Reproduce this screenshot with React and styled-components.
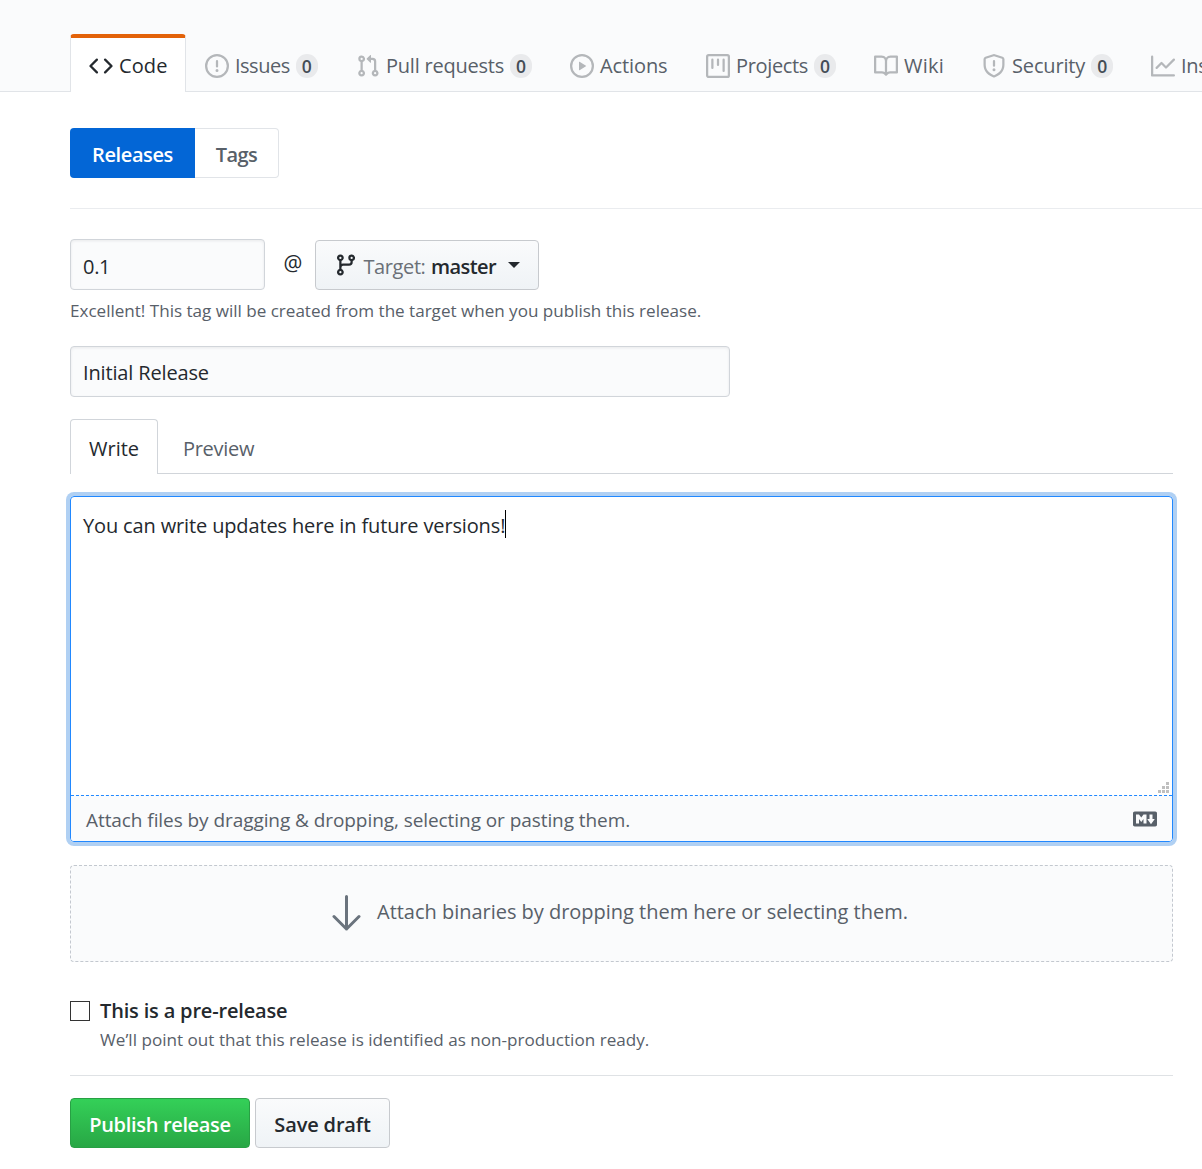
import React, { useState } from 'react';
import styled, { createGlobalStyle, css } from 'styled-components';

const GlobalStyle = createGlobalStyle`
  *, *::before, *::after {
    box-sizing: border-box;
  }

  html, body {
    margin: 0;
    overflow: hidden;
  }

  body {
    background: #fff;
    color: #24292e;
    font-family: 'Segoe UI', 'Open Sans', 'Noto Sans', sans-serif;
    font-size: 20px;
    line-height: 30px;
  }
`;

const Page = styled.div`
  width: 1202px;
  height: 1169px;
  overflow: hidden;
`;

const RepoNav = styled.nav`
  display: flex;
  height: 92px;
  padding: 34px 0 0 70px;
  background: #fafbfc;
  box-shadow: inset 0 -1px 0 #e1e4e8;
  overflow: hidden;
`;

const NavTab = styled.a`
  display: flex;
  flex: none;
  align-items: center;
  width: ${({ $width }) => $width}px;
  padding: 6px 0 0 19px;
  color: #586069;
  white-space: nowrap;

  svg {
    flex: none;
    margin-right: 6px;
    color: #b4b7ba;
  }

  ${({ $active }) => $active && css`
    padding: 2px 0 0 18px;
    background: #fff;
    color: #24292e;
    border: 1px solid #e1e4e8;
    border-top: 4px solid #e36209;
    border-bottom: 0;
    border-radius: 4px 4px 0 0;

    svg {
      color: #24292e;
    }
  `}
`;

const Label = styled.span`
  letter-spacing: ${({ $spacing = 0 }) => $spacing}px;
  white-space: nowrap;
`;

const Counter = styled.span`
  width: 22px;
  height: 24px;
  margin-left: 6px;
  border-radius: 12px;
  background: #e9eaec;
  color: #444d56;
  font-size: 17.5px;
  font-weight: 600;
  line-height: 25px;
  text-align: center;
`;

const Main = styled.main`
  padding: 36px 29px 0 70px;
`;

const Subnav = styled.div`
  display: flex;
  height: 50px;
`;

const SubnavItem = styled.a`
  width: ${({ $width }) => $width}px;
  border: 1px solid #e1e4e8;
  border-left: 0;
  border-radius: 0 4px 4px 0;
  color: #586069;
  font-weight: 600;
  line-height: 51px;
  text-align: center;

  ${({ $selected }) => $selected && css`
    border: 0;
    border-radius: 4px 0 0 4px;
    background: #0366d6;
    color: #fff;
    line-height: 53px;
  `}
`;

const Divider = styled.hr`
  height: 1px;
  margin: 30px -29px 30px 0;
  border: 0;
  background: #eaecef;
`;

const TagRow = styled.div`
  display: flex;
  height: 51px;
`;

const TextInput = styled.input`
  display: block;
  width: ${({ $width }) => $width}px;
  height: 51px;
  padding: 2px 12px 0;
  border: 1px solid #d1d5da;
  border-radius: 4px;
  outline: none;
  background: #fafbfc;
  box-shadow: inset 0 1px 3px rgba(27, 31, 35, 0.08);
  color: #24292e;
  font: inherit;
  letter-spacing: ${({ $spacing = 0 }) => $spacing}px;
`;

const TagInput = styled(TextInput)`
  padding-top: 4px;
`;

const At = styled.span`
  width: 50px;
  padding: 9px 0 0 6px;
  font-size: 21px;
  text-align: center;
`;

const Button = styled.button`
  display: flex;
  align-items: center;
  justify-content: center;
  width: ${({ $width }) => $width}px;
  height: 50px;
  padding: 4px 0 0;
  border: 1px solid #c7cace;
  border-radius: 4px;
  background: linear-gradient(#fafbfc, #eff3f6);
  color: #24292e;
  font: inherit;
  font-weight: 600;

  ${({ $primary }) => $primary && css`
    border-color: #28a044;
    background: linear-gradient(#34d058, #28a745);
    color: #fff;
  `}
`;

const TargetButton = styled(Button)`
  justify-content: flex-start;
  margin-top: 1px;
  padding: 3px 0 0 18px;

  svg {
    margin: -4px 5.5px 0 0;
  }
`;

const TargetPrefix = styled(Label)`
  margin-right: 5.5px;
  color: #6a7077;
  font-weight: 400;
`;

const Caret = styled.span`
  margin: -4px 0 0 12px;
  border: 6px solid transparent;
  border-top-color: #24292e;
  border-bottom: 0;
`;

const Hint = styled.p`
  margin: ${({ $indent }) => ($indent ? '-1px 0 0 30px' : '6px 0 0')};
  color: #586069;
  font-size: 17.1px;
  line-height: 30px;
`;

const TitleRow = styled.div`
  padding-top: 20px;
`;

const EditorTabs = styled.div`
  display: flex;
  height: 55px;
  margin-top: 22px;
  box-shadow: inset 0 -1px 0 #d1d5da;
`;

const EditorTab = styled.button`
  padding: ${({ $active }) => ($active ? '3px 18px 0' : '5px 25px 0')};
  width: ${({ $active }) => ($active ? '88px' : 'auto')};
  border: 0 solid #d1d5da;
  border-width: ${({ $active }) => ($active ? '1px 1px 0' : 0)};
  border-radius: 4px 4px 0 0;
  background: ${({ $active }) => ($active ? '#fff' : 'transparent')};
  color: ${({ $active }) => ($active ? '#24292e' : '#586069')};
  font: inherit;
  text-align: left;
`;

const Editor = styled.div`
  display: flex;
  flex-direction: column;
  height: 346px;
  margin-top: 22px;
  border: 1px solid #2188ff;
  border-radius: 4px;
  box-shadow: 0 0 0 4px #b0d0f3;
`;

const EditorBody = styled.div`
  display: flex;
  position: relative;
  height: 298px;
  padding: 13px 12px;
  line-height: 32px;
`;

const TextCursor = styled.span`
  width: 1px;
  height: 28px;
  background: #000;
`;

const ResizeHandle = styled.svg`
  position: absolute;
  right: 3px;
  bottom: 2px;
`;

const EditorFooter = styled.div`
  display: flex;
  flex: 1;
  align-items: center;
  justify-content: space-between;
  padding: 2px 15px 0;
  border-top: 1px dashed #2188ff;
  border-radius: 0 0 3px 3px;
  background: #fafbfc;
  color: #586069;
  font-size: 19px;

  svg {
    margin-top: -2px;
  }
`;

const DropZone = styled.div`
  display: flex;
  align-items: center;
  height: 97px;
  margin-top: 23px;
  padding: 0 0 3px 261px;
  border: 1px dashed #c3c8cf;
  border-radius: 4px;
  background: #fafbfc;
  color: #586069;

  svg {
    flex: none;
    margin: 1px 15px 0 0;
    color: #6a737d;
  }
`;

const CheckRow = styled.label`
  display: flex;
  align-items: center;
  height: 30px;
  margin-top: 34px;
  font-weight: 600;
`;

const Checkbox = styled.input`
  appearance: none;
  width: 20px;
  height: 20px;
  margin: 0 10px 0 0;
  border: 1px solid #333;
  background: ${({ checked }) => (checked ? '#0366d6' : '#fff')};
`;

const Actions = styled.div`
  display: flex;
  gap: 5px;
  margin-top: 20px;
  padding-top: 22px;
  border-top: 1px solid #dfe2e5;
`;

const icons = {
  code: 'M4.72 3.22a.75.75 0 011.06 1.06L2.06 8l3.72 3.72a.75.75 0 11-1.06 1.06L.47 8.53a.75.75 0 010-1.06l4.25-4.25zm6.56 0a.75.75 0 10-1.06 1.06L13.94 8l-3.72 3.72a.75.75 0 101.06 1.06l4.25-4.25a.75.75 0 000-1.06l-4.25-4.25z',
  issue: 'M8 1.5a6.5 6.5 0 100 13 6.5 6.5 0 000-13zM0 8a8 8 0 1116 0A8 8 0 010 8zm9 3a1 1 0 11-2 0 1 1 0 012 0zm-.25-6.25a.75.75 0 00-1.5 0v3.5a.75.75 0 001.5 0v-3.5z',
  pull: 'M7.177 3.073L9.573.677A.25.25 0 0110 .854v4.792a.25.25 0 01-.427.177L7.177 3.427a.25.25 0 010-.354zM3.75 2.5a.75.75 0 100 1.5.75.75 0 000-1.5zm-2.25.75a2.25 2.25 0 113 2.122v5.256a2.251 2.251 0 11-1.5 0V5.372A2.25 2.25 0 011.5 3.25zM11 2.5h-1V4h1a1 1 0 011 1v5.628a2.251 2.251 0 101.5 0V5A2.5 2.5 0 0011 2.5zm1 10.25a.75.75 0 111.5 0 .75.75 0 01-1.5 0zM3.75 12a.75.75 0 100 1.5.75.75 0 000-1.5z',
  play: 'M1.5 8a6.5 6.5 0 1113 0 6.5 6.5 0 01-13 0zM8 0a8 8 0 100 16A8 8 0 008 0zM6.379 5.227A.25.25 0 006 5.442v5.117a.25.25 0 00.379.214l4.264-2.559a.25.25 0 000-.428L6.379 5.227z',
  project: 'M1.75 0A1.75 1.75 0 000 1.75v12.5C0 15.216.784 16 1.75 16h12.5A1.75 1.75 0 0016 14.25V1.75A1.75 1.75 0 0014.25 0H1.75zM1.5 1.75a.25.25 0 01.25-.25h12.5a.25.25 0 01.25.25v12.5a.25.25 0 01-.25.25H1.75a.25.25 0 01-.25-.25V1.75zM11.75 3a.75.75 0 00-.75.75v7.5a.75.75 0 001.5 0v-7.5a.75.75 0 00-.75-.75zm-8.25.75a.75.75 0 011.5 0v5.5a.75.75 0 01-1.5 0v-5.5zM8 3a.75.75 0 00-.75.75v3.5a.75.75 0 001.5 0v-3.5A.75.75 0 008 3z',
  book: 'M0 1.75A.75.75 0 01.75 1h4.253c1.227 0 2.317.59 3 1.501A3.744 3.744 0 0111.006 1h4.245a.75.75 0 01.75.75v10.5a.75.75 0 01-.75.75h-4.507a2.25 2.25 0 00-1.591.659l-.622.621a.75.75 0 01-1.06 0l-.622-.621A2.25 2.25 0 005.258 13H.75a.75.75 0 01-.75-.75V1.75zm8.755 3a2.25 2.25 0 012.25-2.25H14.5v9h-3.757c-.71 0-1.4.201-1.992.572l.004-7.322zm-1.504 7.324l.004-5.073-.002-2.253A2.25 2.25 0 005.003 2.5H1.5v9h3.757a3.75 3.75 0 011.994.574z',
  shield: 'M7.467.133a1.75 1.75 0 011.066 0l5.25 1.68A1.75 1.75 0 0115 3.48V7c0 1.566-.32 3.182-1.303 4.682-.983 1.498-2.585 2.813-5.032 3.855a1.7 1.7 0 01-1.33 0c-2.447-1.042-4.049-2.357-5.032-3.855C1.32 10.182 1 8.566 1 7V3.48a1.75 1.75 0 011.217-1.667l5.25-1.68zm.61 1.429a.25.25 0 00-.153 0l-5.25 1.68a.25.25 0 00-.174.238V7c0 1.358.275 2.666 1.057 3.86.784 1.194 2.121 2.34 4.366 3.297a.2.2 0 00.154 0c2.245-.956 3.582-2.104 4.366-3.298C13.225 9.666 13.5 8.36 13.5 7V3.48a.25.25 0 00-.174-.237l-5.25-1.68zM9 10.5a1 1 0 11-2 0 1 1 0 012 0zm-.25-5.75a.75.75 0 10-1.5 0v3a.75.75 0 001.5 0v-3z',
  graph: 'M1.5 1.75a.75.75 0 00-1.5 0v12.5c0 .414.336.75.75.75h14.5a.75.75 0 000-1.5H1.5V1.75zm14.28 2.53a.75.75 0 00-1.06-1.06L10 7.94 7.53 5.47a.75.75 0 00-1.06 0L3.22 8.72a.75.75 0 001.06 1.06L7 7.06l2.47 2.47a.75.75 0 001.06 0l5.25-5.25z',
  branch: 'M11.75 2.5a.75.75 0 100 1.5.75.75 0 000-1.5zm-2.25.75a2.25 2.25 0 113 2.122V6A2.5 2.5 0 0110 8.5H6a1 1 0 00-1 1v1.128a2.251 2.251 0 11-1.5 0V5.372a2.25 2.25 0 111.5 0v1.836A2.492 2.492 0 016 7h4a1 1 0 001-1v-.628A2.25 2.25 0 019.5 3.25zM4.25 12a.75.75 0 100 1.5.75.75 0 000-1.5zM3.5 3.25a.75.75 0 111.5 0 .75.75 0 01-1.5 0z',
  markdown: 'M14.85 3H1.15C.52 3 0 3.52 0 4.15v7.69C0 12.48.52 13 1.15 13h13.69c.64 0 1.15-.52 1.15-1.15v-7.7C16 3.52 15.48 3 14.85 3zM9 11H7V8L5.5 9.92 4 8v3H2V5h2l1.5 2L7 5h2v6zm2.99.5L9.5 8H11V5h2v3h1.5l-2.51 3.5z',
};

const Icon = ({ name }) => (
  <svg width="24" height="24" viewBox="0 0 16 16" fill="currentColor" aria-hidden="true">
    <path fillRule="evenodd" d={icons[name]} />
  </svg>
);

const tabs = [
  { label: 'Code', icon: 'code', width: 116, spacing: 0.1, active: true },
  { label: 'Issues', icon: 'issue', width: 151, spacing: -0.5, count: 0 },
  { label: 'Pull requests', icon: 'pull', width: 214, spacing: -0.23, count: 0 },
  { label: 'Actions', icon: 'play', width: 136, spacing: -0.1 },
  { label: 'Projects', icon: 'project', width: 168, spacing: -0.35, count: 0 },
  { label: 'Wiki', icon: 'book', width: 108, spacing: 0.25 },
  { label: 'Security', icon: 'shield', width: 169, spacing: -0.15, count: 0 },
  { label: 'Insights', icon: 'graph', width: 150, spacing: -0.3 },
];

const App = () => {
  const [tag, setTag] = useState('0.1');
  const [title, setTitle] = useState('Initial Release');
  const [preRelease, setPreRelease] = useState(false);

  return (
    <Page>
      <GlobalStyle />
      <RepoNav>
        {tabs.map((tab) => (
          <NavTab key={tab.label} $width={tab.width} $active={tab.active}>
            <Icon name={tab.icon} />
            <Label $spacing={tab.spacing}>{tab.label}</Label>
            {tab.count !== undefined && <Counter>{tab.count}</Counter>}
          </NavTab>
        ))}
      </RepoNav>

      <Main>
        <Subnav>
          <SubnavItem $width={125} $selected>
            <Label $spacing={-0.4}>Releases</Label>
          </SubnavItem>
          <SubnavItem $width={84}>
            <Label $spacing={-0.5}>Tags</Label>
          </SubnavItem>
        </Subnav>
        <Divider />

        <TagRow>
          <TagInput $width={195} $spacing={-0.3} value={tag} onChange={(e) => setTag(e.target.value)} />
          <At>@</At>
          <TargetButton $width={224}>
            <Icon name="branch" />
            <TargetPrefix $spacing={-0.4}>Target:</TargetPrefix>
            <Label $spacing={-0.55}>master</Label>
            <Caret />
          </TargetButton>
        </TagRow>
        <Hint>
          <Label $spacing={-0.02}>Excellent! This tag will be created from the target when you publish this release.</Label>
        </Hint>

        <TitleRow>
          <TextInput $width={660} $spacing={-0.15} value={title} onChange={(e) => setTitle(e.target.value)} />
        </TitleRow>

        <EditorTabs>
          <EditorTab $active>
            <Label>Write</Label>
          </EditorTab>
          <EditorTab>
            <Label $spacing={-0.3}>Preview</Label>
          </EditorTab>
        </EditorTabs>

        <Editor>
          <EditorBody>
            <Label $spacing={-0.14}>You can write updates here in future versions!</Label>
            <TextCursor />
            <ResizeHandle width="11" height="11" fill="#bfbfbf">
              <path d="M8 0h3v3h-3zM4 4h3v3h-3zM8 4h3v3h-3zM0 8h3v3h-3zM4 8h3v3h-3zM8 8h3v3h-3z" />
            </ResizeHandle>
          </EditorBody>
          <EditorFooter>
            <Label $spacing={-0.07}>Attach files by dragging &amp; dropping, selecting or pasting them.</Label>
            <Icon name="markdown" />
          </EditorFooter>
        </Editor>

        <DropZone>
          <svg width="30" height="38" viewBox="0 0 30 38" fill="none" stroke="currentColor" strokeWidth="3" strokeLinecap="round" strokeLinejoin="round">
            <path d="M14.5 2.5V35M2 22.5l12.5 12.5L27 22.5" />
          </svg>
          <Label $spacing={-0.02}>Attach binaries by dropping them here or selecting them.</Label>
        </DropZone>

        <CheckRow>
          <Checkbox type="checkbox" checked={preRelease} onChange={(e) => setPreRelease(e.target.checked)} />
          <Label $spacing={-0.17}>This is a pre-release</Label>
        </CheckRow>
        <Hint $indent>
          <Label $spacing={0.01}>We’ll point out that this release is identified as non-production ready.</Label>
        </Hint>

        <Actions>
          <Button $width={180} $primary>
            <Label $spacing={-0.33}>Publish release</Label>
          </Button>
          <Button $width={135}>
            <Label $spacing={-0.15}>Save draft</Label>
          </Button>
        </Actions>
      </Main>
    </Page>
  );
};

export default App;
